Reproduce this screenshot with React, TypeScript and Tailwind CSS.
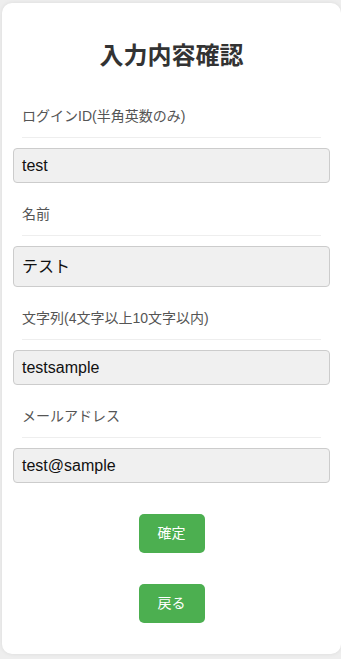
import React from "react";

const fields: { label: string; value: string; h: string }[] = [
  { label: "ログインID(半角英数のみ)", value: "test", h: "h-[35px]" },
  { label: "名前", value: "テスト", h: "h-[41px]" },
  { label: "文字列(4文字以上10文字以内)", value: "testsample", h: "h-[35px]" },
  { label: "メールアドレス", value: "test@sample", h: "h-[35px]" },
];

export default function App() {
  return (
    <div
      className="min-h-[659px] w-[341px] bg-[#eeeeee] pt-[3px] pl-[2px] overflow-hidden"
      style={{ fontFamily: '"Liberation Sans", "Noto Sans CJK JP", sans-serif' }}
    >
      <div className="w-[339px] h-[651px] bg-white rounded-[10px] shadow-[0_0_4px_rgba(0,0,0,0.08)] px-[11px] pt-[37px] pb-[30px] flex flex-col">
        <h1 className="text-center text-[24px] leading-[32px] font-bold text-[#333333] mb-[13px]">
          入力内容確認
        </h1>
        {fields.map((f) => (
          <div key={f.label} className="flex flex-col">
            <div className="mx-[9px] pt-[21px] pb-[11px] border-b border-[#eeeeee] text-[14px] leading-[20px] text-[#555555]">
              {f.label}
            </div>
            <div
              className={`mt-[10px] ${f.h} flex items-center px-[8px] bg-[#f0f0f0] border border-[#cccccc] rounded-[4px] text-[16px] text-[#111111]`}
            >
              {f.value}
            </div>
          </div>
        ))}
        <div className="flex flex-col items-center gap-[31px] mt-[31px]">
          <button className="w-[66px] h-[39px] bg-[#4caf50] text-white text-[14px] rounded-[5px]">
            確定
          </button>
          <button className="w-[66px] h-[39px] bg-[#4caf50] text-white text-[14px] rounded-[5px]">
            戻る
          </button>
        </div>
      </div>
    </div>
  );
}
